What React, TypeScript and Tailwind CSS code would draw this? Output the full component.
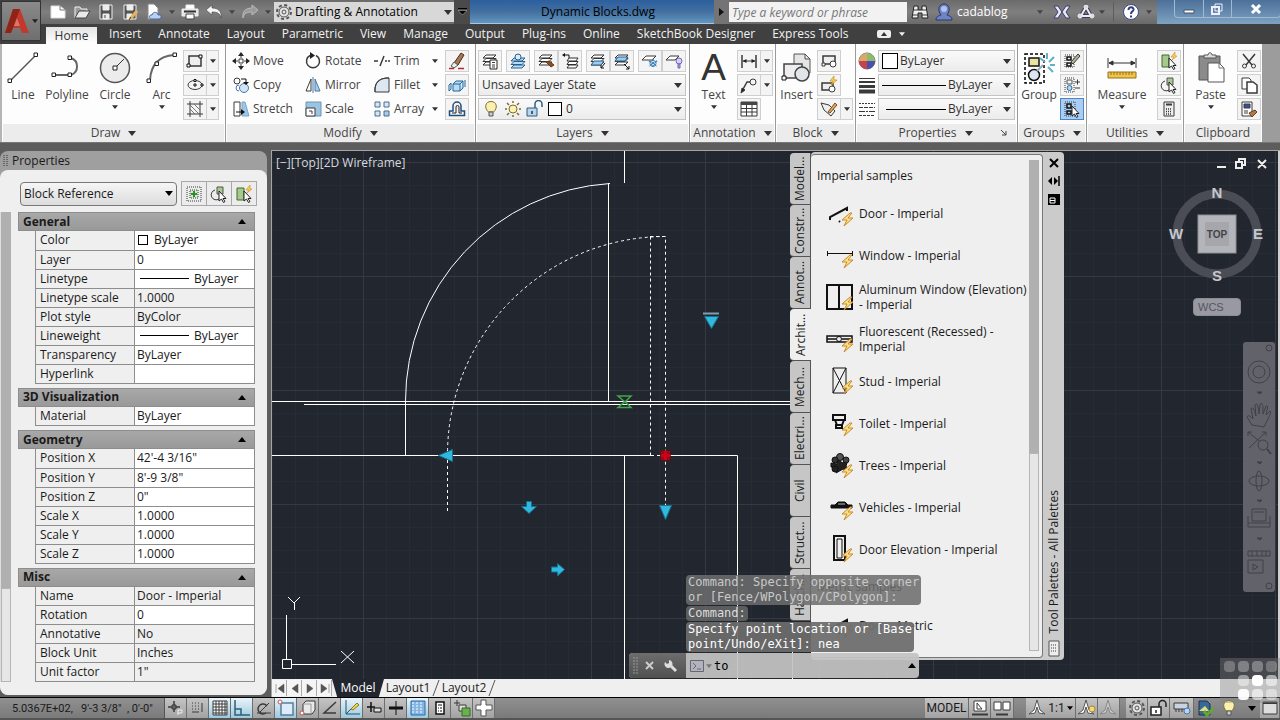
import type { ReactNode } from 'react';

type Kids = { children?: ReactNode };

const Svg = ({ w = 18, h, children }: { w?: number; h?: number } & Kids) => (
  <svg width={w} height={h ?? w} viewBox={`0 0 ${w} ${h ?? w}`} fill="none" stroke="#3a3a3a" className="shrink-0">
    {children}
  </svg>
);

const Caret = ({ className = 'text-[#333]', big = false }: { className?: string; big?: boolean }) => (
  <svg width={big ? 8 : 6} height={big ? 5 : 4} viewBox="0 0 8 5" className={`shrink-0 ${className}`}>
    <path d="M0 0h8L4 5z" fill="currentColor" />
  </svg>
);

const Bolt = ({ x = 0, y = 0 }: { x?: number; y?: number }) => (
  <path d={`M${x + 8} ${y}L${x} ${y + 7}h5l-3 6 9-8h-5l4-5z`} fill="#fbe08a" stroke="#c98a24" />
);

const sheets = (
  <path d="M5 3h10l-3 3H2zM5 6.500h10l-3 3H2zM5 10h10l-3 3H2z" fill="#fff" stroke="#333" />
);

const cursor = <path d="M9 6v10l2.500-2 2 3.500 1.500-1-2-3h3z" fill="#fff" stroke="#222" />;

const icons: Record<string, ReactNode> = {
  // quick access
  new: <Svg><path d="M2 3h9l5 4v8H2z" fill="#fff" stroke="#ddd" /><path d="M11 3v4h5" stroke="#777" /></Svg>,
  open: <Svg><path d="M2 15V4h5l1 2h6v3" stroke="#f0f0f0" fill="#999" /><path d="M2 15l4-7h11l-4 7z" fill="#e8e8e8" stroke="#444" /></Svg>,
  save: <Svg><path d="M3 2h12v14H3z" fill="#555" stroke="#eee" /><path d="M6 2h6v5H6zM6 11h6v5H6z" fill="#eee" stroke="#eee" /><path d="M8 12v3" stroke="#444" /></Svg>,
  saveas: <Svg><path d="M3 2h12v14H3z" fill="#555" stroke="#eee" /><path d="M6 2h6v5H6zM6 11h5v5H6z" fill="#eee" stroke="#eee" /><path d="M9 16l7-8" stroke="#e9b35c" strokeWidth="3" /><path d="M8 17l2-3" stroke="#333" /></Svg>,
  cloud: <Svg><path d="M3 1h6l4 4v11H3z" fill="#fff" stroke="#888" /><path d="M6 16c-3-1-1-5 1-4 1-4 6-3 6 0 4-1 4 4 1 4z" fill="#b9d2f0" stroke="#4565a0" /></Svg>,
  print: <Svg><path d="M5 2h8v4H5z" fill="#fff" stroke="#eee" /><path d="M1 6h16v7H1z" fill="#e6e6e6" stroke="#eee" /><path d="M3 8.500h12" stroke="#333" strokeWidth="2" /><path d="M5 11h8v5H5z" fill="#fff" stroke="#444" /></Svg>,
  undo: <Svg><path d="M7 2L1 7l6 5V9c5 0 8 1 9 6 1-7-3-10-9-10z" fill="#f5f5f5" stroke="#444" strokeWidth=".6" /></Svg>,
  redo: <Svg><path d="M11 2l6 5-6 5V9c-5 0-8 1-9 6-1-7 3-10 9-10z" fill="#9b9b9b" stroke="#c4c4c4" strokeWidth=".8" /></Svg>,
  gear: <Svg><circle cx="9" cy="9" r="7" stroke="#555" strokeWidth="2" strokeDasharray="3 2.500" /><circle cx="9" cy="9" r="5" stroke="#555" fill="#e4e4e4" /><circle cx="9" cy="9" r="2" stroke="#555" /></Svg>,
  binoculars: <Svg><path d="M3 3h4v4h4V3h4l2 12h-6v-5H7v5H1z" fill="#efefef" stroke="#222" /><path d="M3 7h4M11 7h4M2 12h5M11 12h5" /></Svg>,
  user: <Svg><path d="M1 17c0-4 3-4 5-5C2 7 4 1 9 1s7 6 3 11c2 1 5 1 5 5z" fill="#6d83c4" stroke="#27366f" /><circle cx="9" cy="6" r="3" fill="#b4c3ea" stroke="none" /></Svg>,
  exchange: <Svg><path d="M1 3h4l4 6-4 6H1l4-6zM17 3h-4L9 9l4 6h4l-4-6z" fill="#e8e8f4" stroke="#3b3b70" /></Svg>,
  a360: <Svg><path d="M9 4L4 13h10z" stroke="#3b3b60" strokeWidth="4" /><path d="M9 4L4 13h10z" stroke="#eee" strokeWidth="2" /><circle cx="9" cy="4" r="2" fill="#ddd" stroke="#eee" /><circle cx="3" cy="13" r="2" fill="#ddd" stroke="#eee" /><circle cx="15" cy="13" r="2" fill="#ddd" stroke="#eee" /></Svg>,
  help: <Svg><circle cx="9" cy="9" r="7.500" fill="#fff" stroke="#3b4a8c" /><path d="M6.500 7c0-4 5.500-3.500 5 0-.5 1.500-2.500 1.500-2.500 4M9 12.500v2" stroke="#333d7a" strokeWidth="2" /></Svg>,
  // draw
  line: <Svg w={32}><path d="M4 28L28 4" stroke="#555" strokeWidth="1.500" /><path d="M1 27h3.500v3.500H1zM27 1h3.500v3.500H27z" fill="#fff" stroke="#222" /></Svg>,
  polyline: <Svg w={32}><path d="M3 23h17a9 9 0 000-17h-3" stroke="#666" strokeWidth="2" /><path d="M1 21h3.500v3.500H1zM17 21h3.500v3.500H17zM17 4h3.500v3.500H17z" fill="#fff" stroke="#222" /></Svg>,
  circle: <Svg w={32}><circle cx="16" cy="16" r="14.500" fill="#ececec" stroke="#555" strokeWidth="1.500" /><path d="M16 16l9-9" stroke="#333" /><path d="M14 14h4v4h-4z" fill="#fff" stroke="#222" /></Svg>,
  arc: <Svg w={32}><path d="M4 28C5 12 14 4 28 3" stroke="#666" strokeWidth="2" /><path d="M1 27h3.500v3.500H1zM9 10h3.500v3.500H9zM27 1h3.500v3.500H27z" fill="#fff" stroke="#222" /></Svg>,
  rect: <Svg><path d="M3 4h12v10H3z" fill="#eee" strokeWidth="1.500" /><path d="M1 12h3v3H1zM13 3h3v3h-3z" fill="#fff" stroke="#111" /></Svg>,
  ellipse: <Svg><ellipse cx="9" cy="9" rx="7" ry="4.500" /><path d="M8 8h2v2H8zM15 8h2v2h-2zM8 3.500h2v2H8z" fill="#fff" stroke="#111" /></Svg>,
  hatch: <Svg><path d="M4 1v16M14 1v16M1 4h16M1 14h16" /><path d="M4 5l9 9M4 9l5 5M8 4l6 6" stroke="#777" /></Svg>,
  // modify
  move: <Svg><path d="M9 0l3 4H6zM9 18l3-4H6zM0 9l4-3v6zM18 9l-4-3v6z" fill="#222" stroke="none" /><path d="M7 7h4v4H7z" /><path d="M9 3v3M9 12v3M3 9h3M12 9h3" /></Svg>,
  copy: <Svg><circle cx="5" cy="5" r="3" /><circle cx="12" cy="12" r="4.500" fill="#d5e4f5" stroke="#4678a8" /><path d="M7 15a3 3 0 110-6" stroke="#4678a8" /><path d="M9 3h5v4" stroke="#111" /><path d="M11 6h6l-3 3z" fill="#111" stroke="none" /></Svg>,
  stretch: <Svg><path d="M2 2h6v14H2z" fill="#fff" /><path d="M10 2h3l4 14h-7z" fill="#9cc7e6" stroke="#79a6c6" /><path d="M4 12h6" stroke="#111" /><path d="M9 9l4 3-4 3z" fill="#111" stroke="none" /></Svg>,
  rotate: <Svg><path d="M6 3.500a6.500 6.500 0 106 0" strokeWidth="1.500" /><path d="M6 0v7l5-3.500z" fill="#222" stroke="none" /></Svg>,
  mirror: <Svg><path d="M7 3v12H2z" fill="#fff" /><path d="M11 3v12h5z" fill="#a9cdea" stroke="#4678a8" /><path d="M9 1v16" stroke="#4678a8" /></Svg>,
  scale: <Svg><path d="M2 2h15v14H2z" fill="#9cc4e0" stroke="#6a94b4" /><path d="M2 8h9v8H2z" fill="#fff" /><path d="M5 11h3v3" /></Svg>,
  trim: <Svg><path d="M1 9h4M7 14l4-10M12 9h2M15 9h2" strokeWidth="1.500" /></Svg>,
  fillet: <Svg><path d="M2 16V12Q3 3 13 2h3v14z" fill="#dde7f1" /><path d="M2 16v-4Q3 3 13 2h3" /></Svg>,
  array: <Svg><path d="M2 2h5v5H2zM11 2h5v5h-5zM2 11h5v5H2z" fill="#d8e5f2" stroke="#4a6d92" /><path d="M11 11h5v5h-5z" fill="#a8cbe8" stroke="#4a6d92" /></Svg>,
  erase: <Svg><path d="M6 11l7-10 3 2-6 10z" fill="#a97552" stroke="#4b2f1d" /><path d="M3 14l3-4 4 3-4 3z" fill="#eee" stroke="#555" /><path d="M1 16.500h5M10 16.500h6" stroke="#b62c2c" strokeWidth="1.500" /></Svg>,
  explode: <Svg><path d="M5 8h7v7H5zM5 8l3-3h7l-3 3M12 15l3-3V5" fill="#b9dcf5" stroke="#1f659b" /><path d="M1 9l2-2v6l-2 2zM17 4v7" stroke="#1f659b" /></Svg>,
  offset: <Svg><path d="M1.500 15.500h15V11H13V6a4 4 0 00-8 0v5H1.500z" stroke="#1f4f7b" strokeWidth="1.500" /><path d="M4 13h4V7a1.500 1.500 0 013 0v6h3" stroke="#222" /></Svg>,
  // layers
  layerprops: <Svg>{sheets}<path d="M9 8h7v9H9z" fill="#fff" stroke="#222" /><path d="M11 10.500h3M11 13h3M11 15h3" /></Svg>,
  layercur: <Svg><path d="M5 6h11l-3 3H2zM5 9.500h11l-3 3H2zM5 13h11l-3 3H2z" fill="#b9dcf5" stroke="#28618f" /><circle cx="9" cy="5" r="3" fill="#dcecfa" stroke="#28618f" /></Svg>,
  layermatch: <Svg>{sheets}<path d="M9 10l5 5 3-2-5-4z" fill="#8c4f2b" stroke="#6b3a1a" /></Svg>,
  layerprev: <Svg><path d="M8 6h9l-2 3H6zM8 9.500h9l-2 3H6zM8 13h9l-2 3H6z" fill="#fff" stroke="#333" /><path d="M3 3h5v3" stroke="#111" /><path d="M1 3l3-2v4z" fill="#111" stroke="none" /></Svg>,
  layeriso: <Svg>{sheets}<path d="M5 9h10l-3 4H2z" fill="#9cccf0" stroke="#28618f" /><path d="M16 11l-4 5M12 13v3h3" stroke="#111" /></Svg>,
  layeruniso: <Svg>{sheets}<path d="M5 5h10l-3 4H2z" fill="#9cccf0" stroke="#28618f" /><path d="M11 12l5 5M16 14v3h-3" stroke="#111" /></Svg>,
  layerfreeze: <Svg><path d="M5 4h10l-4 4H1z" fill="#fff" /><path d="M12 7v9M8 9l8 5M16 9l-8 5" stroke="#3b83bd" strokeDasharray="2 1" strokeWidth="1.500" /><circle cx="12" cy="11.500" r="3" stroke="#3b83bd" /></Svg>,
  layeroff: <Svg><path d="M5 4h9l-4 4H1z" fill="#fff" /><circle cx="14" cy="9" r="3" fill="#d6d3f7" stroke="#7068b8" /><path d="M13 12h2v4h-2z" fill="#aaa6d8" stroke="#7068b8" /></Svg>,
  bulb: <Svg><path d="M6.500 12C2 8 3 1.500 9 1.500S16 8 11.500 12z" fill="#fdf0ae" stroke="#77703f" /><path d="M7 12h4v4H7z" fill="#ccc" stroke="#555" /></Svg>,
  sun: <Svg><circle cx="9" cy="9" r="4" fill="#fdf3b0" stroke="#7b6c2f" /><path d="M9 1v2M9 15v2M1 9h2M15 9h2M3 3l2 2M13 13l2 2M15 3l-2 2M5 13l-2 2" stroke="#7b6c2f" strokeWidth="1.500" /></Svg>,
  lock: <Svg><path d="M1 8h10v8H1z" fill="#b8d7ee" stroke="#2f5d84" /><path d="M9 8V4a3.500 3.500 0 017 0v3" stroke="#2f5d84" strokeWidth="1.500" /><path d="M6 11v3" stroke="#234" strokeWidth="1.500" /></Svg>,
  // annotation + block
  dim: <Svg><path d="M2 3v13M16 3v13" strokeWidth="1.500" /><path d="M3 9h12" /><path d="M2.500 9l4-2v4zM15.500 9l-4-2v4z" fill="#222" stroke="none" /></Svg>,
  leader: <Svg><circle cx="13" cy="6" r="3" /><path d="M10 6H7L2 15" strokeWidth="1.500" /><path d="M1 17l1-5 3 2z" fill="#222" /></Svg>,
  table: <Svg><path d="M1 2h16v14H1z" fill="#fff" /><path d="M1 3.500h16" strokeWidth="3" stroke="#444" /><path d="M1 8.500h16M1 12h16M6.500 5v11M12 5v11" /></Svg>,
  insert: <Svg w={32}><path d="M13 2h11l5 5v14H13z" fill="#e5e5e5" stroke="#555" /><path d="M24 2v5h5" stroke="#555" /><path d="M3 12h18v14H3z" fill="#eee" stroke="#444" strokeWidth="1.500" /><circle cx="21" cy="22" r="7" fill="#e1e5ea" stroke="#444" strokeWidth="1.500" /><path d="M1 24h4v4H1z" fill="#fff" stroke="#111" /></Svg>,
  create: <Svg><path d="M3 4h12v8H3z" fill="#eee" strokeWidth="1.500" /><circle cx="13" cy="12" r="3" fill="#fff" /><path d="M2 11h3v3H2z" fill="#fff" /></Svg>,
  blockedit: <Svg><path d="M2 7h11v7H2z" fill="#eee" strokeWidth="1.500" /><circle cx="12" cy="13" r="3" fill="#fff" /><path d="M14 0l-4 5h3l-2 4 6-5h-3z" fill="#fbd35c" stroke="#c98a24" strokeWidth=".7" /></Svg>,
  attr: <Svg><path d="M1 3l8 2 6 6-4 5-7-6z" fill="#eee" /><path d="M8 12l7-9 2 2-7 8z" fill="#dba95d" stroke="#7b4c1f" /></Svg>,
  // properties
  color: <Svg><circle cx="9" cy="9" r="8" fill="#efefef" stroke="#666" /><path d="M9 9V1a8 8 0 00-8 8z" fill="#d9a86a" stroke="none" /><path d="M9 9h8a8 8 0 00-8-8z" fill="#8dbb6b" stroke="none" /><path d="M9 9h8a8 8 0 01-8 8z" fill="#4a4fa8" stroke="none" /><path d="M9 9v8a8 8 0 01-8-8z" fill="#c9414b" stroke="none" /></Svg>,
  weight: <Svg><path d="M1 2.500h16" /><path d="M1 6h16" strokeWidth="2" /><path d="M1 10.500h16" strokeWidth="3" /><path d="M1 15.500h16" strokeWidth="4" /></Svg>,
  ltype: <Svg><path d="M1 3.500h16" strokeDasharray="2 1" /><path d="M1 7.500h16" strokeDasharray="4 1" /><path d="M1 11.500h16" strokeDasharray="6 1 2 1" /><path d="M1 15.500h16" strokeDasharray="3 1" /></Svg>,
  // groups
  group: <Svg w={32}><path d="M2 2h19v29H2z" stroke="#000" strokeWidth="1.500" strokeDasharray="3 2" /><path d="M6 6h10v8H6z" fill="#e9e3a4" stroke="#111" strokeWidth="1.500" /><circle cx="11" cy="23" r="5.500" fill="#dde5f5" stroke="#111" strokeWidth="1.500" /><path d="M14 19l6-6" stroke="#9ab" strokeWidth="2" /><path d="M22 10l-5-4M24 7V1M26 10l5-5M27 13h5M25 15l5 5" stroke="#62b0c9" strokeWidth="2" /></Svg>,
  groupedit: <Svg><path d="M2 3h9v12H2z" strokeDasharray="1 1" /><path d="M4 5h4v3H4zM4 11h4v3H4z" stroke="#111" strokeWidth="1.500" /><path d="M8 10l7-8 2 2-7 8z" fill="#a8b890" /></Svg>,
  groupadd: <Svg><path d="M2 2h9v14H2z" strokeDasharray="1 1" /><path d="M4 4h5v4H4z" stroke="#555" /><circle cx="6.500" cy="12" r="2.500" fill="#b7d8f2" stroke="#2c6a9c" /><path d="M12 6h5M14.500 3.500v5M12 12h5" /></Svg>,
  groupsel: <Svg><path d="M2 2h10v14H2z" strokeDasharray="1 1" /><path d="M4 4h4v4H4zM4 11h4v3H4z" stroke="#111" strokeWidth="1.500" />{cursor}</Svg>,
  // utilities + clipboard
  measure: <Svg w={32}><path d="M2 6v10M30 6v10M3 11h26M3 11l4-2v4zM29 11l-4-2v4z" fill="#333" stroke="#333" /><path d="M2 20h28v6H2z" fill="#f0c54a" stroke="#94701a" /><path d="M5 20v3M8 20v3M11 20v3M14 20v3M17 20v3M20 20v3M23 20v3M26 20v3" stroke="#94701a" /></Svg>,
  qselect: <Svg><path d="M2 3h7v12H2z" fill="#a6c98e" stroke="#446a2f" />{cursor}<path d="M15 0l-4 5h3l-2 3 5-4h-2z" fill="#fbd35c" stroke="#c98a24" strokeWidth=".6" /></Svg>,
  select: <Svg><path d="M7 2h6v7H7z" fill="#a6c98e" stroke="#555" /><path d="M5 5a5 5 0 104 9" />{cursor}</Svg>,
  calc: <Svg><path d="M4 2h10v14H4z" fill="#eee" /><path d="M6 4.500h6" strokeWidth="2" /><path d="M6 9h6M6 11.500h6M6 14h6" strokeDasharray="1 1" strokeWidth="1.500" /></Svg>,
  paste: <Svg w={32}><path d="M4 4h21v24H4z" fill="#8b8b8b" stroke="#555" /><path d="M9 6V3h4c0-3 4-3 4 0h4v3z" fill="#ddd" stroke="#555" /><path d="M13 11h11l5 5v14H13z" fill="#fff" stroke="#555" /><path d="M24 11v5h5" stroke="#777" /></Svg>,
  cut: <Svg><path d="M3 2l9 11M15 2L6 13" strokeWidth="1.500" /><circle cx="4.500" cy="14" r="2" /><circle cx="13.500" cy="14" r="2" /></Svg>,
  clipcopy: <Svg><path d="M2 2h7l2 2v9H2z" fill="#fff" /><path d="M7 6h6l4 3v8H7z" fill="#fff" strokeWidth="1.500" /></Svg>,
  matchprop: <Svg><path d="M2 2h10v14H2z" fill="#fff" /><path d="M4 4h6v4H4z" fill="#3b4f93" /><path d="M4 11h4M4 13h4" /><path d="M9 13l6-3 2 2-5 5z" fill="#b57743" stroke="#64401f" /></Svg>,
  pickadd: <Svg><path d="M2 2h14v14H2z" strokeDasharray="1 1" /><path d="M5 5h8v8H5z" fill="#d9e8d5" strokeDasharray="1 1" /><path d="M9 6v6M6 9h6" stroke="#2f8c2f" strokeWidth="2" /></Svg>,
  // status bar
  infer: <Svg><path d="M7 2v11M1 8h12" strokeWidth="1.500" /><path d="M5 6h4v4H5z" fill="#666" /><path d="M11 16v-5h4v3h-4" stroke="#eee" /></Svg>,
  snap: <Svg><path d="M3 4h1M6 4h1M9 4h1M3 7h1M6 7h1M9 7h1M3 10h1M6 10h1M9 10h1M3 13h7M13 4v9" /></Svg>,
  grid: <Svg><path d="M2 2h14v14H2z" fill="#fff" /><path d="M5 2v14M8 2v14M11 2v14M14 2v14M2 5h14M2 8h14M2 11h14M2 14h14" /></Svg>,
  ortho: <Svg><path d="M2 1v15h15M2 10h6v6" stroke="#2c5f7a" strokeWidth="1.500" /></Svg>,
  polar: <Svg><path d="M2 14h14M5 13l9-9" /><path d="M12 7a5 5 0 10-1 7" strokeWidth="1.500" /></Svg>,
  osnap: <Svg><path d="M4 4h12v12H4z" fill="#dcecfb" stroke="#5b7d9c" strokeWidth="1.500" /><circle cx="3" cy="3" r="2" fill="#fff" stroke="#b55" /></Svg>,
  osnap3d: <Svg><path d="M4 5l3-3h9v9l-3 4H4z" fill="#e9e9e9" /><path d="M4 5h8v9" stroke="#999" /><circle cx="3" cy="14" r="2" fill="#fff" stroke="#b55" /></Svg>,
  otrack: <Svg><path d="M15 3L3 14h12" strokeWidth="1.500" /></Svg>,
  ducs: <Svg><path d="M3 1v14h14M3 15l8-8" stroke="#25536d" /><path d="M8 10l6-6 2 2-6 5z" fill="#eed65c" stroke="#907820" /></Svg>,
  dyn: <Svg><path d="M2 8h8M6 3v10" stroke="#111" strokeWidth="1.500" /><path d="M9 9h7v4H9z" fill="#ddd" stroke="#111" /></Svg>,
  lwt: <Svg><path d="M9 2v14" stroke="#111" /><path d="M2 9h14" stroke="#111" strokeWidth="3" /></Svg>,
  tpy: <Svg><path d="M2 2h14v14H2z" fill="#86b5e4" stroke="#2f6aa5" /><path d="M3 4h12M3 7h12M3 10h12M3 13h12" stroke="#d3e7fa" strokeWidth="1.500" strokeDasharray="2 2" /></Svg>,
  qp: <Svg><path d="M5 3h8v12H5z" fill="#fff" stroke="#111" strokeWidth="1.500" /><path d="M7 6h4M7 9h1M9 9h2M7 12h1M9 12h2" stroke="#111" /></Svg>,
  sc: <Svg><path d="M1 4h6M4 1v6" /><path d="M6 6h7v6H6z" fill="#ddd" /><path d="M9 9h8v8H9z" fill="#69b04f" stroke="#356c22" /></Svg>,
  am: <Svg><path d="M6 1h5v5h6v5h-6v6H6v-6H1V6h5z" fill="#fff" stroke="#555" /></Svg>,
  msheet: <Svg><path d="M3 2h12v10H3z" fill="#fff" /><path d="M6 4v6h5z" /><path d="M1 15.500h16" strokeWidth="2" /></Svg>,
  quickview: <Svg><path d="M1 3h7v8H1zM10 3h7v8h-7z" fill="#fff" /><path d="M3 15.500h12" strokeWidth="2" /></Svg>,
  anno: <Svg><path d="M9 1l3 10 5 4-6-1-2-6-2 6-6 1 5-4z" fill="#fff" stroke="#555" /></Svg>,
  annovis: <Svg><path d="M8 1l3 10 5 4-6-1-2-6-2 6-6 1 5-4z" fill="#fff" stroke="#555" /><circle cx="14" cy="10" r="3" fill="#f5d780" stroke="#a8862b" /></Svg>,
  annoauto: <Svg><path d="M8 1l3 10 5 4-6-1-2-6-2 6-6 1 5-4z" fill="#c9c9c9" stroke="#888" /></Svg>,
  unlock: <Svg><path d="M1 8h10v8H1z" fill="#fff" stroke="#222" strokeWidth="1.500" /><path d="M9 8V5a3.500 3.500 0 017 0v3M6 11v3" stroke="#222" strokeWidth="1.500" /></Svg>,
  hardware: <Svg><path d="M1 4h14v6H1z" fill="#c9d3e2" /><path d="M3 10v3M6 10v3M9 10v3" /><circle cx="14" cy="12" r="3" fill="#b8d4f4" stroke="#4e78a8" /></Svg>,
  isolate: <Svg><path d="M2 2h8l3 3v11H2z" fill="#35689c" stroke="#234" /><path d="M2 12l6-5 4 5z" fill="#e6df75" stroke="none" /><path d="M7 12l3 4 7-7" stroke="#62a832" strokeWidth="3" /></Svg>,
  clean: <Svg><path d="M2 3h14v12H2z" fill="#ddd" /><path d="M2 4h14" strokeWidth="2" /></Svg>,
  props: <Svg><path d="M4 1h10v15H4z" fill="#eee" stroke="#555" /><path d="M6 5h6M6 8h6M6 11h6" strokeDasharray="1 1" /></Svg>,
};

const tabs = ['Insert', 'Annotate', 'Layout', 'Parametric', 'View', 'Manage', 'Output', 'Plug-ins', 'Online', 'SketchBook Designer', 'Express Tools'];

function IconButton({ name, label, className = '' }: { name: string; label?: string; className?: string }) {
  return (
    <button aria-label={label ?? name} className={`flex items-center justify-center shrink-0 ${className}`}>
      {icons[name]}
    </button>
  );
}

function TitleBar() {
  return (
    <div className="flex h-6 items-center bg-gradient-to-b from-[#6b6b6b] via-[#7f7f7f] to-[#6a6a6a]">
      <div className="flex w-[233px] shrink-0 items-center gap-[6px] pl-2">
        {['new', 'open', 'save', 'saveas', 'cloud'].map((n) => <IconButton key={n} name={n} />)}
        <Caret className="text-[#444]" />
        <IconButton name="print" />
        <IconButton name="undo" />
        <Caret className="text-[#444]" />
        <IconButton name="redo" />
        <Caret className="text-[#444]" />
      </div>
      <div className="flex h-5 w-[180px] shrink-0 items-center gap-[2px] bg-[#d8d8d8] pl-px pr-[2px]">
        {icons.gear}
        <select aria-label="Workspace" className="min-w-0 flex-1 appearance-none bg-transparent text-[12px] text-black">
          <option>Drafting &amp; Annotation</option>
        </select>
        <Caret big />
      </div>
      <button aria-label="Customize" className="flex h-6 w-4 shrink-0 items-center justify-center bg-[#4a4a4a]">
        <svg width="9" height="8"><path d="M0 .5h9" stroke="#000" /><path d="M0 2.500h9L4.500 7z" fill="#000" stroke="#ccc" strokeWidth=".5" /></svg>
      </button>
      <div className="flex h-6 min-w-[244px] flex-1 items-center justify-center border-b border-[#a9c6e0] bg-gradient-to-b from-[#2d5f9f] via-[#426f9f] to-[#6296c0] pl-3 text-[12px] text-black">
        Dynamic Blocks.dwg
      </div>
      <button aria-label="Expand search" className="flex h-6 w-[15px] shrink-0 items-center justify-center bg-[#747474]">
        <svg width="5" height="8"><path d="M0 0l5 4-5 4z" fill="#111" /></svg>
      </button>
      <input aria-label="Search" placeholder="Type a keyword or phrase" className="h-5 w-[178px] shrink-0 bg-[#f2f2f2] px-[3px] text-[12px] italic placeholder:text-[#777]" />
      <div className="flex w-[250px] shrink-0 items-center pl-1">
        <IconButton name="binoculars" />
        <IconButton name="user" className="ml-[6px]" />
        <button className="ml-1 w-20 text-left text-[12px] text-white">cadablog</button>
        <Caret className="text-[#444]" />
        <IconButton name="exchange" className="ml-[10px]" />
        <IconButton name="a360" className="ml-[6px]" />
        <Caret className="ml-1 text-[#444]" />
        <span className="ml-2 h-5 w-px bg-[#5d5d5d]" />
        <IconButton name="help" className="ml-2" />
        <Caret className="ml-[6px] text-[#444]" />
      </div>
      <div className="flex h-6 w-[124px] shrink-0 justify-end bg-gradient-to-b from-[#4c7099] to-[#7ea3c2]">
        <div className="flex h-[18px] w-[107px] rounded-b border border-t-0 border-[#9fbad2]">
          <button aria-label="Minimize" className="flex flex-1 items-center justify-center border-r border-[#9fbad2]">
            <svg width="12" height="12"><path d="M1 7h10v3H1z" fill="#fff" stroke="#456" /></svg>
          </button>
          <button aria-label="Restore" className="flex flex-1 items-center justify-center border-r border-[#9fbad2]">
            <svg width="12" height="12" fill="none" stroke="#eef"><path d="M4 1h7v7H4z" /><path d="M1 4h7v7H1z" strokeWidth="2" /></svg>
          </button>
          <button aria-label="Close" className="flex w-12 items-center justify-center">
            <svg width="12" height="12"><path d="M2 2l8 8M10 2l-8 8" stroke="#fff" strokeWidth="3" /></svg>
          </button>
        </div>
      </div>
    </div>
  );
}

function MenuTabs() {
  return (
    <nav className="flex h-5 items-end bg-[#404040] pl-[5px] text-[12px] text-[#f2f2f2]">
      <button className="h-[17px] w-[51px] bg-gradient-to-b from-[#e4e4e4] to-white leading-4 text-[#333]">Home</button>
      <div className="flex h-5 items-center gap-[17px] pb-px pl-3">
        {tabs.map((t) => <button key={t} className="whitespace-nowrap">{t}</button>)}
        <button aria-label="Minimize ribbon" className="ml-3 flex items-center gap-2">
          <svg width="14" height="8"><rect width="14" height="8" rx="2" fill="#eee" /><path d="M4 6h6L7 2z" fill="#333" /></svg>
          <Caret className="text-[#eee]" />
        </button>
      </div>
    </nav>
  );
}

function Panel({ title, width, noCaret, corner, children }: { title: string; width: string; noCaret?: boolean; corner?: boolean } & Kids) {
  return (
    <section className={`flex shrink-0 flex-col border-r border-[#9a9a9a] bg-[#fdfdfd] ${width}`}>
      <div className="flex h-20 pt-[6px]">{children}</div>
      <div className="mx-px flex h-[18px] items-center justify-center gap-2 bg-[#ececec] text-[12px] text-[#444]">
        {title}
        {!noCaret && <Caret big />}
        {corner && <svg width="6" height="6" className="-mr-8 ml-5"><path d="M0 0l5 5M5 1v4H1" stroke="#444" fill="none" /></svg>}
      </div>
    </section>
  );
}

function Big({ icon, label, width, caret }: { icon: ReactNode; label: string; width: string; caret?: boolean }) {
  return (
    <button className={`flex shrink-0 flex-col items-center text-[12px] text-[#444] ${width}`}>
      <span className="flex h-9 items-center">{icon}</span>
      <span className="leading-[18px]">{label}</span>
      {caret && <Caret className="mt-px text-[#333]" />}
    </button>
  );
}

function Small({ name, caret, active }: { name: string; caret?: boolean; active?: boolean }) {
  return (
    <button
      aria-label={name}
      className={`flex h-[22px] items-center border ${active ? 'border-[#4d86c4] bg-[#a9cdf3]' : 'border-[#cfcfcf] bg-[#f4f4f4]'} ${caret ? 'w-9' : 'w-6'}`}
    >
      <span className="flex w-[22px] justify-center">{icons[name]}</span>
      {caret && <span className="flex h-full flex-1 items-center justify-center border-l border-[#cfcfcf]"><Caret /></span>}
    </button>
  );
}

const SmallColumn = ({ children, className = '' }: Kids & { className?: string }) => (
  <div className={`flex shrink-0 flex-col gap-[2px] ${className}`}>{children}</div>
);

function Labelled({ items, width }: { items: [string, string, boolean?][]; width: string }) {
  return (
    <div className={`flex shrink-0 flex-col gap-[2px] ${width}`}>
      {items.map(([icon, label, caret]) => (
        <button key={label} className="flex h-[22px] items-center text-[12px] text-[#444]">
          {icons[icon]}
          <span className="ml-[3px] w-9 text-left">{label}</span>
          {caret && <Caret className="ml-[2px] text-[#333]" />}
        </button>
      ))}
    </div>
  );
}

function Combo({ label, value, children }: { label: string; value: string } & Kids) {
  return (
    <div className="flex h-[22px] items-center gap-1 border border-[#c4c4c4] bg-gradient-to-b from-[#fafafa] to-[#ececec] px-[3px] text-[12px] text-[#333]">
      {children}
      <select aria-label={label} className="min-w-0 flex-1 appearance-none bg-transparent">
        <option>{value}</option>
      </select>
      <Caret big />
    </div>
  );
}

function Ribbon() {
  return (
    <div className="flex h-[99px] border-b border-[#777] bg-gradient-to-r from-[#b5b5b5] to-[#9c9c9c] pl-[2px]">
      <Panel title="Draw" width="w-[224px]">
        <Big icon={icons.line} label="Line" width="w-[42px]" />
        <Big icon={icons.polyline} label="Polyline" width="w-[46px]" />
        <Big icon={icons.circle} label="Circle" width="w-[50px]" caret />
        <Big icon={icons.arc} label="Arc" width="w-[43px]" caret />
        <SmallColumn><Small name="rect" caret /><Small name="ellipse" caret /><Small name="hatch" caret /></SmallColumn>
      </Panel>
      <Panel title="Modify" width="w-[250px]">
        <div className="w-[6px] shrink-0" />
        <Labelled width="w-[72px]" items={[['move', 'Move'], ['copy', 'Copy'], ['stretch', 'Stretch']]} />
        <Labelled width="w-[69px]" items={[['rotate', 'Rotate'], ['mirror', 'Mirror'], ['scale', 'Scale']]} />
        <Labelled width="w-[72px]" items={[['trim', 'Trim', true], ['fillet', 'Fillet', true], ['array', 'Array', true]]} />
        <SmallColumn><Small name="erase" /><Small name="explode" /><Small name="offset" /></SmallColumn>
      </Panel>
      <Panel title="Layers" width="w-[214px]">
        <div className="flex w-[210px] flex-col gap-[2px] pl-[2px]">
          <div className="flex justify-between">
            <Small name="layerprops" />
            <Small name="layercur" />
            <div className="flex"><Small name="layermatch" /><Small name="layerprev" /></div>
            <div className="flex"><Small name="layeriso" /><Small name="layeruniso" /></div>
            <div className="flex"><Small name="layerfreeze" /><Small name="layeroff" /></div>
          </div>
          <Combo label="Layer state" value="Unsaved Layer State" />
          <Combo label="Layer" value="0">
            {icons.bulb}{icons.sun}{icons.lock}
            <span className="h-[14px] w-[14px] shrink-0 border border-black bg-white" />
          </Combo>
        </div>
      </Panel>
      <Panel title="Annotation" width="w-[86px]">
        <Big icon={<span className="text-[37px] leading-9 text-[#333] [font-family:'Liberation_Sans',Arial,sans-serif]">A</span>} label="Text" width="w-[47px]" caret />
        <SmallColumn><Small name="dim" caret /><Small name="leader" caret /><Small name="table" /></SmallColumn>
      </Panel>
      <Panel title="Block" width="w-[80px]">
        <Big icon={icons.insert} label="Insert" width="w-[41px]" />
        <SmallColumn><Small name="create" /><Small name="blockedit" /><Small name="attr" caret /></SmallColumn>
      </Panel>
      <Panel title="Properties" width="w-[162px]" corner>
        <div className="flex w-[22px] shrink-0 flex-col items-center gap-[6px] pt-[2px]">{icons.color}{icons.weight}{icons.ltype}</div>
        <div className="flex w-[137px] flex-col gap-[2px]">
          <Combo label="Object color" value="ByLayer"><span className="-mr-[2px] h-4 w-4 shrink-0 border border-black bg-white" /></Combo>
          <Combo label="Lineweight" value="ByLayer"><span className="-mr-[2px] h-px w-16 shrink-0 bg-black" /></Combo>
          <Combo label="Linetype" value="ByLayer"><span className="-mr-[2px] ml-1 h-px w-[60px] shrink-0 bg-black" /></Combo>
        </div>
      </Panel>
      <Panel title="Groups" width="w-[69px]">
        <Big icon={icons.group} label="Group" width="w-[42px]" />
        <SmallColumn><Small name="groupedit" /><Small name="groupadd" /><Small name="groupsel" active /></SmallColumn>
      </Panel>
      <Panel title="Utilities" width="w-[97px]">
        <Big icon={icons.measure} label="Measure" width="w-[70px]" caret />
        <SmallColumn><Small name="qselect" /><Small name="select" /><Small name="calc" /></SmallColumn>
      </Panel>
      <Panel title="Clipboard" width="w-[79px]" noCaret>
        <Big icon={icons.paste} label="Paste" width="w-[53px]" caret />
        <SmallColumn><Small name="cut" /><Small name="clipcopy" /><Small name="matchprop" /></SmallColumn>
      </Panel>
    </div>
  );
}

type Row = { label: string; value: string; readOnly?: boolean; swatch?: 'box' | 'line' };

const groups: { title: string; rows: Row[] }[] = [
  {
    title: 'General',
    rows: [
      { label: 'Color', value: 'ByLayer', swatch: 'box' },
      { label: 'Layer', value: '0' },
      { label: 'Linetype', value: 'ByLayer', swatch: 'line' },
      { label: 'Linetype scale', value: '1.0000', readOnly: true },
      { label: 'Plot style', value: 'ByColor', readOnly: true },
      { label: 'Lineweight', value: 'ByLayer', swatch: 'line' },
      { label: 'Transparency', value: 'ByLayer' },
      { label: 'Hyperlink', value: '' },
    ],
  },
  { title: '3D Visualization', rows: [{ label: 'Material', value: 'ByLayer' }] },
  {
    title: 'Geometry',
    rows: [
      { label: 'Position X', value: '42\'-4 3/16"' },
      { label: 'Position Y', value: '8\'-9 3/8"' },
      { label: 'Position Z', value: '0"' },
      { label: 'Scale X', value: '1.0000' },
      { label: 'Scale Y', value: '1.0000' },
      { label: 'Scale Z', value: '1.0000' },
    ],
  },
  {
    title: 'Misc',
    rows: [
      { label: 'Name', value: 'Door - Imperial', readOnly: true },
      { label: 'Rotation', value: '0' },
      { label: 'Annotative', value: 'No', readOnly: true },
      { label: 'Block Unit', value: 'Inches', readOnly: true },
      { label: 'Unit factor', value: '1"', readOnly: true },
    ],
  },
];

function PropertiesPalette() {
  return (
    <aside className="flex w-[267px] shrink-0 flex-col overflow-hidden rounded-lg bg-[#9f9f9f] text-[12px] text-[#1a1a1a]">
      <header className="flex h-[19px] shrink-0 items-center gap-1 pl-[3px]">
        <svg width="5" height="12"><path d="M1 0v12M4 0v12" stroke="#333" strokeDasharray="1 1" /></svg>
        Properties
      </header>
      <div className="flex flex-1 flex-col rounded-t-lg bg-[#efefef] pt-[11px]">
        <div className="flex items-center pl-5">
          <div className="flex h-6 w-[157px] items-center rounded-sm border border-[#777] bg-gradient-to-b from-[#f6f6f6] to-[#dcdcdc] px-[3px]">
            <select aria-label="Object type" className="min-w-0 flex-1 appearance-none bg-transparent">
              <option>Block Reference</option>
            </select>
            <Caret big className="text-black" />
          </div>
          <div className="ml-1 flex border-l border-[#a8a8a8]">
            {['pickadd', 'select', 'qselect'].map((n) => (
              <IconButton key={n} name={n} className="h-[25px] w-[25px] border border-l-0 border-[#a8a8a8] bg-[#ececec]" />
            ))}
          </div>
        </div>
        <div className="mt-[6px] flex flex-1 pb-[13px]">
          <div className="mr-[7px] flex w-[11px] shrink-0 flex-col border-l border-[#ddd] bg-[#b0b0b0]">
            <div className="flex-1" />
            <div className="h-[94px] border border-[#b5b5b5] bg-[#e6e6e6]" />
          </div>
          <div className="flex w-[237px] flex-col gap-1">
            {groups.map((g) => (
              <section key={g.title}>
                <button className="flex h-[19px] w-full items-center justify-between border border-[#8d8d8d] bg-gradient-to-b from-[#a8a8a8] to-[#999] pl-1 pr-2 font-bold">
                  {g.title}
                  <svg width="8" height="5"><path d="M0 5h8L4 0z" /></svg>
                </button>
                <table className="ml-[17px] w-[220px] table-fixed border-collapse">
                  <tbody>
                    {g.rows.map((r) => (
                      <tr key={r.label} className="h-[19px]">
                        <th className="w-[99px] border border-t-0 border-[#8d8d8d] p-0 pl-1 text-left font-normal leading-[18px]">{r.label}</th>
                        <td className={`border border-t-0 border-[#8d8d8d] p-0 leading-[18px] ${r.readOnly ? '' : 'bg-white'}`}>
                          <div className="flex h-[18px] items-center pl-[2px]">
                            {r.swatch === 'box' && <span className="ml-px mr-[6px] h-[10px] w-[10px] shrink-0 border border-black" />}
                            {r.swatch === 'line' && <span className="ml-[3px] mr-[5px] h-px w-[49px] shrink-0 bg-black" />}
                            <input aria-label={r.label} defaultValue={r.value} readOnly={r.readOnly} className="h-[18px] w-full min-w-0 bg-transparent" />
                          </div>
                        </td>
                      </tr>
                    ))}
                  </tbody>
                </table>
              </section>
            ))}
          </div>
        </div>
      </div>
    </aside>
  );
}

// Model-space geometry, shifted from window coordinates to the viewport origin.
function Drawing() {
  return (
    <svg className="absolute inset-0 h-full w-full" fill="none">
      <defs>
        <pattern id="grid" width="114" height="114" patternUnits="userSpaceOnUse" x="91" y="11">
          <path d="M23.500 0v114M46.500 0v114M68.500 0v114M91.500 0v114M0 23.500h114M0 46.500h114M0 68.500h114M0 91.500h114" stroke="#272b34" />
          <path d="M.5 0v114M0 .5h114" stroke="#343943" />
        </pattern>
      </defs>
      <rect width="100%" height="100%" fill="url(#grid)" />
      <g transform="translate(-272 -151)" stroke="#fff">
        <path d="M405.500 455V401.500A218 218 0 01610 183.500M608.500 183v218M272 401.500h518M304 404.500h486M624.500 151v32" />
        <path d="M272 455.500h379M665 455.500h72.500V679M624.500 455v224M792.500 640v39" />
        <path d="M447.500 511v-56A218 218 0 01665.500 236.500V506M650.500 236.500V455M650 236.500h15M651 455.500h14" strokeDasharray="3 3" />
        <path d="M703 313.500h16" stroke="#7f9db0" strokeWidth="2" />
        <g fill="#2fb9dc" stroke="#176f93">
          <path d="M704.500 316.500h14l-7 12zM438.500 455.500l14-6v12zM659.500 505.500h12l-6 14z" />
          <path d="M526.500 501.500h5v5h5l-7.500 7-7.500-7h5zM551.500 567v5h6v4l7-6.500-7-6v3.500z" />
        </g>
        <path d="M660.500 450.500h10v10h-10z" fill="#8c0d16" stroke="#5c0d16" strokeDasharray="2 1" />
        <path d="M661 455.500h9M665.500 451v9" stroke="#d00018" strokeWidth="3" />
        <path d="M618 396h13l-6 6zM618 407.500h13l-6-6z" stroke="#3fa64a" strokeWidth="1.500" />
        <path d="M286.500 615v45M292 664.500h44M282.500 659.500h9v9h-9z" />
        <path d="M341 651l13 12M354 651l-13 12M288 597l6 6 6-6M294.500 603v7" />
      </g>
    </svg>
  );
}

function ViewCube() {
  return (
    <div className="absolute right-[11px] top-[33px] flex flex-col items-center text-[13px] font-bold text-[#c5c7cc] [font-family:'Liberation_Sans',Arial,sans-serif]">
      <svg width="100" height="104">
        <circle cx="50" cy="50" r="40" fill="none" stroke="#4a4c56" strokeWidth="9" />
        <rect x="31" y="31" width="38" height="38" fill="#b4b5ba" stroke="#8d8e94" />
        <rect x="38" y="38" width="24" height="24" fill="#a6a7ac" />
        <g fill="currentColor" fontSize="15" textAnchor="middle">
          <text x="50" y="14">N</text>
          <text x="50" y="97">S</text>
          <text x="9" y="55">W</text>
          <text x="91" y="55">E</text>
          <text x="50" y="54" fontSize="10" fill="#444">TOP</text>
        </g>
      </svg>
      <button className="mt-[10px] h-[18px] w-12 rounded border border-[#8b8c95] bg-[#9899a1] pl-1 text-left text-[11px] font-normal leading-4 text-[#55565e]">WCS</button>
    </div>
  );
}

function NavBar() {
  return (
    <svg className="absolute right-[3px] top-[190px]" width="32" height="252" fill="none" stroke="#404148">
      <rect x="0" y="1" width="32" height="250" rx="3" fill="#62636a" stroke="none" />
      <circle cx="26" cy="7" r="3" />
      <circle cx="16" cy="31" r="11" />
      <circle cx="16" cy="31" r="6" />
      <path d="M9 84l-5-8c1-3 4 0 6 2l-2-10c2-3 3 1 5 7l-1-11c2-3 3 0 4 9l1-10c3-2 3 2 3 10l3-8c3-1 1 3 0 9l4-4c2 1-1 5-2 8l-4 8z" />
      <path d="M5 91l20 16M23 91L6 107M5 91h4M5 91v4M23 91h-4M23 91v4" />
      <circle cx="20" cy="104" r="5" fill="#62636a" />
      <path d="M24 108l4 5" strokeWidth="2" />
      <ellipse cx="16" cy="140" rx="10" ry="5" />
      <ellipse cx="16" cy="140" rx="3" ry="10" />
      <path d="M5 182h22v4H5zM9 168h14v12H9zM11 171h10M5 175v7M27 175v7M5 210h22v5H5zM5 219h15v13H5zM10 223l5 3-5 3zM9 210v5M14 210v5M19 210v5M23 210v5" />
      <path d="M14 51h5l-2 2zM14 121h5l-2 2zM14 159h5l-2 2zM14 197h5l-2 2z" fill="#404148" />
      <circle cx="26" cy="245" r="3" />
    </svg>
  );
}

const tools: { label: string; art: ReactNode }[] = [
  { label: 'Door - Imperial', art: <path d="M4 21v-3l17-9v3M13 22l1 1" strokeWidth="2" /> },
  { label: 'Window - Imperial', art: <path d="M1.500 10v5M1 12.500h25M26.500 10v5" /> },
  { label: 'Aluminum Window (Elevation) - Imperial', art: <path d="M1 2h25v24H1zM13 2v24" strokeWidth="2" /> },
  { label: 'Fluorescent (Recessed) - Imperial', art: <><path d="M1 11h25v6H1zM1 14h9M16 14h9" strokeWidth="1.500" /><circle cx="13" cy="14" r="2.500" /></> },
  { label: 'Stud - Imperial', art: <path d="M7 1h13v25H7zM7 1l13 25M20 1L7 26" /> },
  { label: 'Toilet - Imperial', art: <path d="M7 6h12v5H7zM9 11l2 5h5l2-5M10 16h6v3h-6z" strokeWidth="2" /> },
  { label: 'Trees - Imperial', art: <><path d="M5 12l6 1 2-5 3 4 6-3-2 6 3 5-6-2-7 4 1-5-6-1z" fill="#222" /><circle cx="14" cy="6" r="3.500" fill="#555" /><circle cx="9" cy="9" r="3" fill="#333" /><circle cx="20" cy="9" r="3" fill="#444" /><circle cx="9" cy="18" r="3" fill="#222" /></> },
  { label: 'Vehicles - Imperial', art: <><path d="M5 12h4l3-3h7l3 3h4v3H5z" fill="#111" /><path d="M12 11h7" stroke="#bbb" /></> },
  { label: 'Door Elevation - Imperial', art: <><path d="M8 1h11v24H8z" strokeWidth="2" /><path d="M11 4h5v19h-5z" /></> },
];

function ToolItem({ label, art }: { label: string; art: ReactNode }) {
  return (
    <button className="flex h-[42px] w-full items-center gap-1 pl-[15px] text-left leading-[15px]">
      <svg width="29" height="34" viewBox="0 -3 29 34" fill="none" stroke="#111" className="shrink-0">
        {art}
        <Bolt x={16} y={14} />
      </svg>
      <span className="w-[168px]">{label}</span>
    </button>
  );
}

const paletteTabs = ['Model...', 'Constr...', 'Annot...', 'Archit...', 'Mech...', 'Electri...', 'Civil', 'Struct...', 'Hatch...'];

function ToolPalettes() {
  return (
    <div className="absolute right-[214px] top-[1px] flex text-[12px] text-[#1a1a1a]">
      <div className="flex flex-col pt-px">
        {paletteTabs.map((t) => (
          <button
            key={t}
            className={`flex h-[52px] w-[21px] rotate-180 items-center justify-center rounded-r border-t border-[#555] [writing-mode:vertical-rl] ${t === 'Archit...' ? 'bg-[#efefef]' : 'border-l bg-[#c6c6c6]'}`}
          >
            {t}
          </button>
        ))}
      </div>
      <div className="flex h-[508px] rounded bg-[#cbcbcb] py-[2px]">
        <div className="flex w-[232px] rounded border border-l-0 border-[#777] bg-[#efefef] pt-[5px] pb-[6px]">
          <div className="flex-1 overflow-hidden">
            <h3 className="h-8 pl-[6px] leading-8">Imperial samples</h3>
            {tools.map((t) => <ToolItem key={t.label} {...t} />)}
            <h3 className="h-[34px] pl-[6px] leading-[34px]">Metric samples</h3>
            <ToolItem label="Door - Metric" art={tools[0].art} />
          </div>
          <div className="mr-[3px] flex w-[10px] shrink-0 flex-col bg-[#b0b0b0]">
            <div className="flex-1" />
            <div className="h-[198px] border border-[#b5b5b5] bg-[#e6e6e6]" />
          </div>
        </div>
        <div className="flex w-[21px] flex-col items-center gap-[7px] pt-1">
          <button aria-label="Close palette"><svg width="12" height="10"><path d="M2 1l8 8M10 1L2 9" stroke="#000" strokeWidth="2" /></svg></button>
          <button aria-label="Auto-hide"><svg width="12" height="12"><path d="M0 6l4-4v8zM10 6L6 2v8z" /><path d="M11 1v10" stroke="#000" strokeWidth="1.500" /></svg></button>
          <button aria-label="Palette menu"><svg width="12" height="11"><path d="M0 0h12v11H0z" /><path d="M2 4h5v5H2zM2 6.500h5" stroke="#fff" /></svg></button>
          <span className="mt-auto rotate-180 whitespace-nowrap [writing-mode:vertical-rl]">Tool Palettes - All Palettes</span>
          {icons.props}
        </div>
      </div>
    </div>
  );
}

function CommandLine() {
  return (
    <div className="absolute bottom-px left-[357px] flex w-[290px] flex-col text-[12px] [font-family:'DejaVu_Sans_Mono',monospace]">
      <div className="mb-px ml-[57px] flex flex-col items-start gap-px whitespace-pre leading-[15px] text-[#c9c9c9]">
        <p className="rounded-sm bg-[#6c6c6cdd] px-[2px]">{'Command: Specify opposite corner\nor [Fence/WPolygon/CPolygon]:'}</p>
        <p className="rounded-sm bg-[#6c6c6ccc] px-[2px] text-[#dedede]">Command:</p>
        <p className="rounded-sm bg-[#6c6c6cee] px-[2px] text-white">{'Specify point location or [Base\npoint/Undo/eXit]: nea'}</p>
      </div>
      <div className="flex h-[25px] items-center rounded-sm bg-[#c3c3c3ee]">
        <div className="flex h-full w-[57px] shrink-0 items-center rounded-l-sm bg-gradient-to-b from-[#6d6d6d] to-[#505050] pl-1">
          <svg width="5" height="17"><path d="M1 0v17M4 0v17" stroke="#999" strokeDasharray="2 1" /></svg>
          <button aria-label="Close command line" className="ml-[7px]"><svg width="9" height="9"><path d="M1 1l7 7M8 1L1 8" stroke="#ccc" strokeWidth="2" /></svg></button>
          <button aria-label="Customize command line" className="ml-[10px]">
            <svg width="14" height="14"><path d="M5 5l7 7" stroke="#ddd" strokeWidth="3" /><path d="M1 3l2 2 2-1V1a4 4 0 11-4 2z" fill="#ddd" /></svg>
          </button>
        </div>
        <svg width="14" height="12" className="ml-1" fill="none" stroke="#667"><path d="M.5.500h13v11H.500z" fill="#b3b3bb" /><path d="M3 3l3 3-3 3M7 9h4" /></svg>
        <Caret className="ml-[2px] text-[#777]" />
        <input aria-label="Command" defaultValue="to" className="ml-[2px] min-w-0 flex-1 bg-transparent text-black" />
        <svg width="8" height="5" className="mr-[3px]"><path d="M0 5h8L4 0z" /></svg>
      </div>
    </div>
  );
}

function LayoutTabs() {
  const nav = ['M3 2v9M11 2L5 6.500l6 4.500z', 'M10 2L4 6.500l6 4.500z', 'M4 2l6 4.500L4 11z', 'M3 2l6 4.500L3 11zM11 2v9'];
  return (
    <div className="flex h-[18px] shrink-0 items-center bg-[#efefef] text-[12px] text-[#222]">
      {nav.map((d) => (
        <button key={d} aria-label="Scroll layouts" className="flex h-4 w-[15px] items-center justify-center border-r border-[#aaa] bg-[#f5f5f5]">
          <svg width="13" height="13"><path d={d} fill="#555" stroke="#555" strokeWidth=".5" /></svg>
        </button>
      ))}
      <button className="h-[18px] w-[52px] bg-[#22262e] text-white [clip-path:polygon(0_0,100%_0,90%_100%,10%_100%)]">Model</button>
      <button className="w-12 text-center">Layout1</button>
      <svg width="8" height="16"><path d="M7 0L1 16" stroke="#555" /></svg>
      <button className="w-12 text-center">Layout2</button>
      <svg width="8" height="16"><path d="M7 0L1 16" stroke="#555" /></svg>
    </div>
  );
}

const toggles = ['infer', 'snap', 'grid', 'ortho', 'polar', 'osnap', 'osnap3d', 'otrack', 'ducs', 'dyn', 'lwt', 'tpy', 'qp', 'sc', 'am'];
const lit = ['grid', 'ortho', 'osnap', 'ducs', 'tpy'];
const statusCell = 'h-5 border-r border-[#6e6e6e] bg-gradient-to-b from-[#c4c4c4] to-[#a2a2a2]';

function StatusBar() {
  return (
    <footer className="flex h-[23px] shrink-0 items-start border-y border-b-2 border-t-black border-b-[#555] bg-gradient-to-b from-[#909090] to-[#7a7a7a] text-[12px] text-[#1a1a1a] [font-family:Roboto,sans-serif]">
      <div className="h-5 w-[165px] shrink-0 whitespace-pre border-r border-[#555] pl-3 text-[11px] leading-[21px]">{'5.0367E+02,   9\'-3 3/8"  , 0\'-0"'}</div>
      {toggles.map((t) => (
        <IconButton key={t} name={t} className={lit.includes(t) ? 'h-5 w-[22px] border-r border-[#6e6e6e] bg-gradient-to-b from-[#e8f4fa] to-[#9dc9dd]' : `w-[22px] ${statusCell}`} />
      ))}
      <div className="flex-1" />
      <button className={`w-[44px] ${statusCell}`}>MODEL</button>
      <IconButton name="msheet" className={`w-[22px] ${statusCell}`} />
      <IconButton name="quickview" className={`w-[23px] ${statusCell}`} />
      <div className="w-3" />
      <button className={`flex w-[50px] items-center justify-center gap-[2px] ${statusCell}`}>{icons.anno}1:1<Caret className="text-black" /></button>
      <IconButton name="annovis" className={`w-[22px] ${statusCell}`} />
      <IconButton name="annoauto" className={`w-[22px] ${statusCell}`} />
      <div className="w-[6px]" />
      <IconButton name="gear" className={`w-[22px] ${statusCell}`} />
      <IconButton name="unlock" className={`w-[22px] ${statusCell}`} />
      <IconButton name="hardware" className={`w-[24px] ${statusCell}`} />
      <IconButton name="isolate" className="h-5 w-6" />
      <IconButton name="bulb" className="h-5 w-[22px]" />
      <button aria-label="Status bar menu" className="flex h-5 flex-none items-center pl-2 pr-1"><Caret big className="text-black" /></button>
      <IconButton name="clean" className={`w-[20px] ${statusCell}`} />
    </footer>
  );
}

function Watermark() {
  const cells = [0.25, 0.3, 0.3, 0.25, 0, 0.45, 1, 0.55, 0, 0.95, 0.6, 0.45];
  return (
    <div className="pointer-events-none absolute bottom-[17px] right-0 grid grid-cols-4 gap-[3px] bg-[#80808066] py-[3px] pl-1 pr-[3px]">
      {cells.map((o, i) => <span key={i} className="h-[11px] w-[11px] rounded-sm bg-white" style={{ opacity: o }} />)}
    </div>
  );
}

export default function App() {
  return (
    <div className="relative flex h-screen w-full flex-col overflow-hidden bg-[#5d5d5d] [font-family:'Open_Sans','Noto_Sans',sans-serif]">
      <div className="flex shrink-0 bg-[#404040]">
        <button aria-label="Application menu" className="m-px mr-0 flex h-10 w-10 shrink-0 items-center justify-center gap-[3px] border border-[#333] bg-gradient-to-b from-[#8a8a8a] to-[#6f6f6f]">
          <svg width="24" height="26"><path d="M8 1h7l9 24h-7l-2-5H8l-2 5H0z" fill="#c23a2c" /><path d="M8 1L0 25h6l9-24z" fill="#8f2318" /><path d="M12 10l3 8H9z" fill="#d9776a" /></svg>
          <Caret className="text-[#222]" />
        </button>
        <div className="min-w-0 flex-1">
          <TitleBar />
          <MenuTabs />
        </div>
      </div>
      <Ribbon />
      <main className="flex min-h-0 flex-1 pt-[7px]">
        <div className="flex pb-[2px] pr-1 pt-px"><PropertiesPalette /></div>
        <div className="flex min-w-0 flex-1 flex-col border-l border-t border-[#a5a5a5]">
          <div className="relative min-h-0 flex-1 overflow-hidden border-r-2 border-[#d0d0d0] bg-[#22262e]">
            <Drawing />
            <p className="absolute left-1 top-[3px] text-[12px] text-[#d6d9de]">[−][Top][2D Wireframe]</p>
            <svg className="absolute right-[8px] top-[6px]" width="54" height="13" fill="none" stroke="#eee" strokeWidth="2">
              <path d="M1 10h9M20 5h6v6h-6zM23 5V2h6v6h-3M42 3l8 8M50 3l-8 8" />
            </svg>
            <ViewCube />
            <NavBar />
            <ToolPalettes />
            <CommandLine />
          </div>
          <LayoutTabs />
        </div>
      </main>
      <StatusBar />
      <Watermark />
    </div>
  );
}
